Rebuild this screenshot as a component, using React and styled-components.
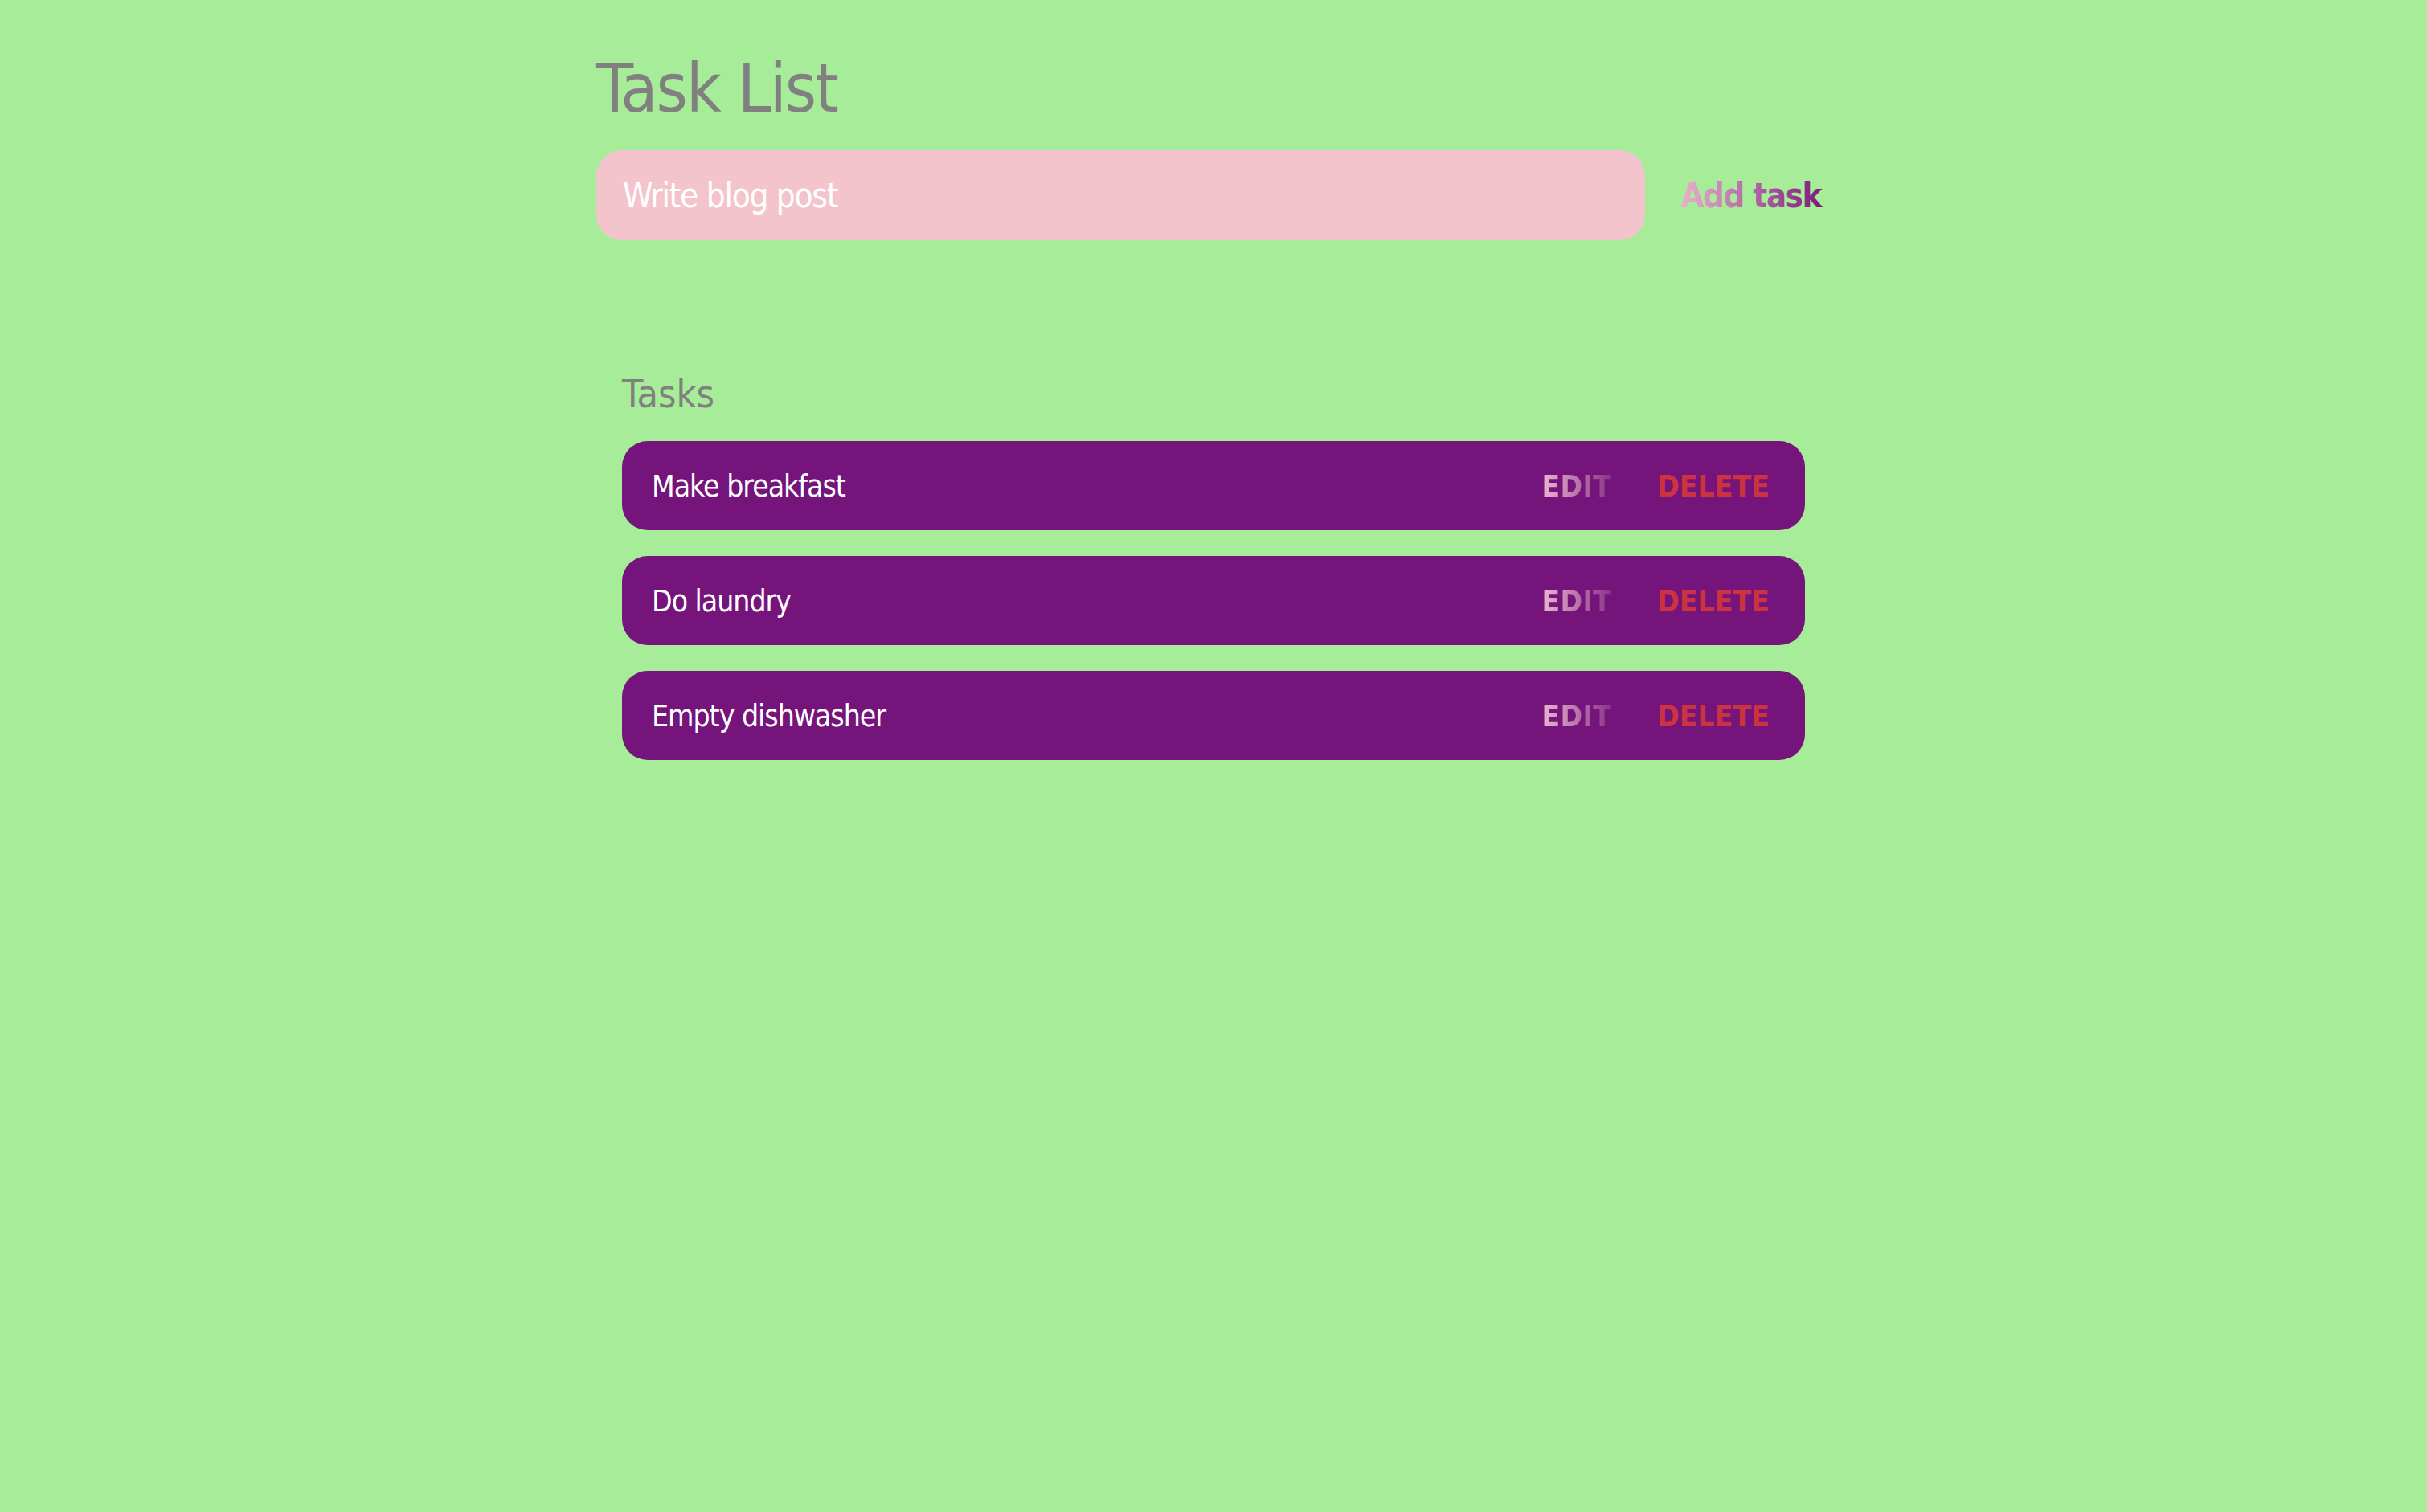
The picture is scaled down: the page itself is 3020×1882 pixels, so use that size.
import React, { useState } from "react"
import styled, { createGlobalStyle } from "styled-components"

const GlobalStyle = createGlobalStyle`
  body {
    margin: 0;
    background: #a7ec98;
    font-family: "DejaVu Sans Condensed", "DejaVu Sans", sans-serif;
  }
`

const Page = styled.div`
  min-height: 100vh;
  background: #a7ec98;
`

const Container = styled.main`
  width: 1536px;
  margin: 0 auto;
  padding-top: 60px;
`

const Title = styled.h1`
  margin: 0;
  font-size: 84px;
  line-height: 100px;
  font-weight: normal;
  letter-spacing: -2px;
  color: #808080;
`

const Form = styled.form`
  display: flex;
  align-items: center;
  gap: 32px;
  margin-top: 27px;
`

const Input = styled.input`
  flex: 1;
  height: 112px;
  box-sizing: border-box;
  border: none;
  outline: none;
  border-radius: 32px;
  padding: 0 33px;
  background: #f4c4cc;
  color: #fff;
  font-family: inherit;
  font-size: 42px;
  letter-spacing: -1.3px;
`

const GradientButton = styled.button`
  border: none;
  padding: 0 12px;
  cursor: pointer;
  font-family: inherit;
  font-weight: bold;
  font-size: ${props => props.size || 42}px;
  letter-spacing: ${props => props.spacing || 0}px;
  background: linear-gradient(90deg, ${props => props.from}, ${props => props.to});
  -webkit-background-clip: text;
  background-clip: text;
  color: transparent;
`

const Section = styled.section`
  padding: 0 32px;
  margin-top: 161px;
`

const SectionTitle = styled.h2`
  margin: 0;
  font-size: 48px;
  line-height: 60px;
  font-weight: normal;
  color: #808080;
`

const List = styled.ul`
  list-style: none;
  margin: 29px 0 0;
  padding: 0;
  display: flex;
  flex-direction: column;
  gap: 32px;
`

const Row = styled.li`
  display: flex;
  align-items: center;
  height: 111px;
  padding: 2px 44px 0 37px;
  box-sizing: border-box;
  border-radius: 32px;
  background: #75147a;
`

const TaskName = styled.span`
  flex: 1;
  color: #fff;
  font-size: 37px;
  letter-spacing: -1px;
`

const Actions = styled.div`
  display: flex;
  gap: 57px;
`

const TextButton = styled.button`
  border: none;
  padding: 0;
  background: none;
  cursor: pointer;
  font-family: inherit;
  font-weight: bold;
  font-size: 37px;
  color: #cc3340;
`

const EditButton = styled(GradientButton)`
  padding: 0;
`

const initialTasks = ["Make breakfast", "Do laundry", "Empty dishwasher"]

export default function App() {
  const [tasks, setTasks] = useState(initialTasks)
  const [text, setText] = useState("Write blog post")

  const addTask = e => {
    e.preventDefault()
    if (!text.trim()) return
    setTasks([...tasks, text])
    setText("")
  }

  return (
    <Page>
      <GlobalStyle />
      <Container>
        <Title>Task List</Title>
        <Form onSubmit={addTask}>
          <Input value={text} onChange={e => setText(e.target.value)} />
          <GradientButton type="submit" spacing={-1.6} from="#f2bcd2" to="#75147a">
            Add task
          </GradientButton>
        </Form>
        <Section>
          <SectionTitle>Tasks</SectionTitle>
          <List>
            {tasks.map((task, i) => (
              <Row key={i}>
                <TaskName>{task}</TaskName>
                <Actions>
                  <EditButton size={37} spacing={0.3} from="#eab6cf" to="#8a3488">
                    EDIT
                  </EditButton>
                  <TextButton onClick={() => setTasks(tasks.filter((_, j) => j !== i))}>
                    DELETE
                  </TextButton>
                </Actions>
              </Row>
            ))}
          </List>
        </Section>
      </Container>
    </Page>
  )
}
